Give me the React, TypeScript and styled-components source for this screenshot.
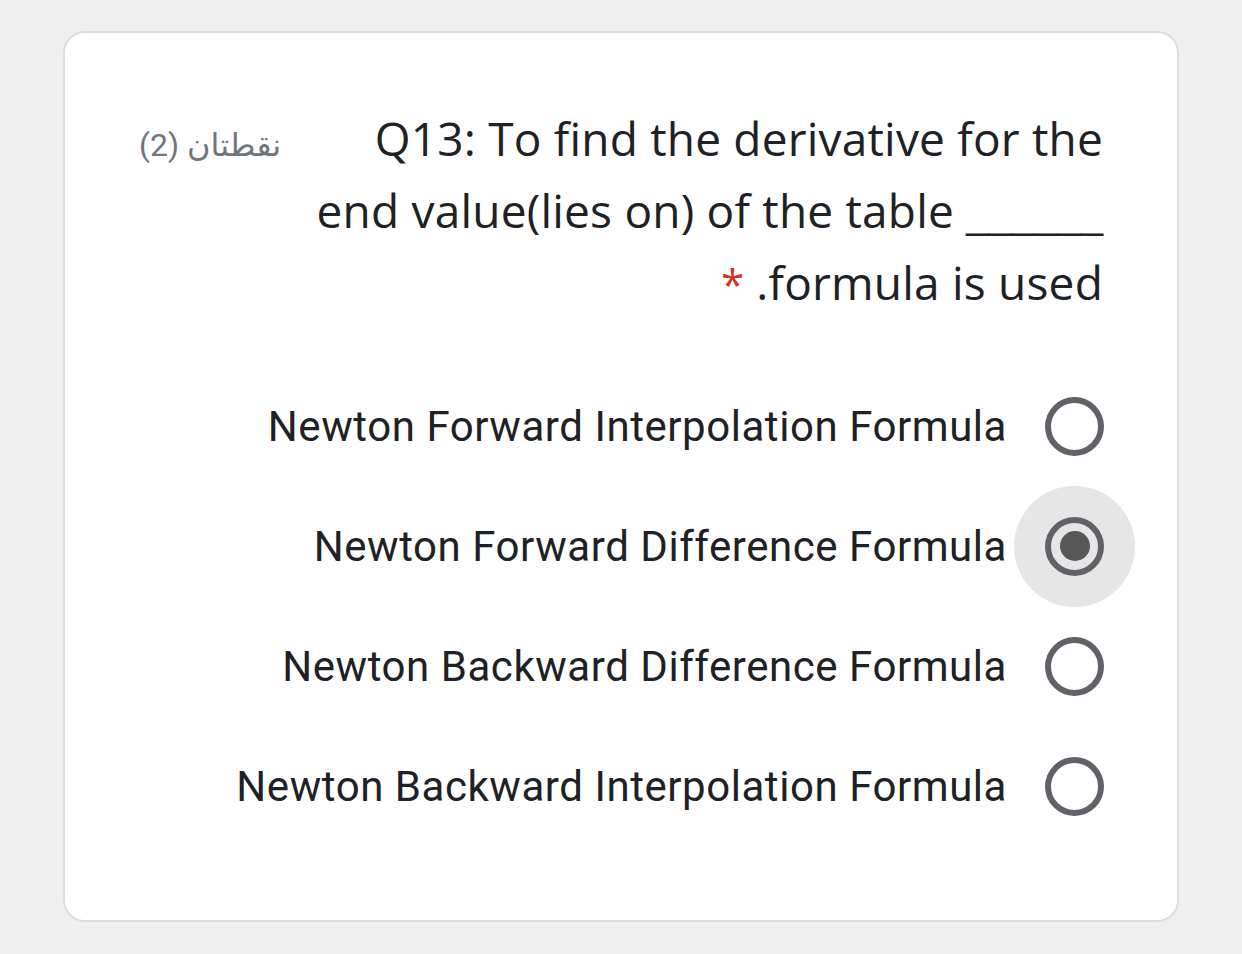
import React from "react";
import styled, { createGlobalStyle, css } from "styled-components";

const GlobalStyle = createGlobalStyle`
  html, body {
    margin: 0;
    padding: 0;
    background: #efefef;
  }
  body {
    font-family: "Roboto", "Liberation Sans", sans-serif;
  }
`;

const Page = styled.div`
  width: 1242px;
  height: 954px;
  box-sizing: border-box;
  padding: 31px 63px 0;
`;

const Card = styled.div`
  box-sizing: border-box;
  width: 1116px;
  height: 891px;
  background: #ffffff;
  border: 2px solid #dcdcdc;
  border-radius: 22px;
  padding: 69px 74px 0 74px;
  direction: rtl;
`;

const Header = styled.div`
  display: flex;
  align-items: baseline;
  gap: 28px;
`;

const Title = styled.div`
  flex: 1;
  font-family: "Open Sans", "Liberation Sans", sans-serif;
  font-size: 46px;
  line-height: 72px;
  color: #202124;
  letter-spacing: 0.2px;
`;

const Blank = styled.span`
  font-family: "Liberation Sans", sans-serif;
  font-size: 41px;
  line-height: 0;
  letter-spacing: 0;
`;

const Required = styled.span`
  color: #d93025;
  margin-right: 12px;
  font-size: 42px;
  line-height: 0;
`;

const Points = styled.div`
  font-family: "Roboto", "DejaVu Sans", sans-serif;
  font-size: 32px;
  color: #70757a;
  white-space: nowrap;
`;

const Options = styled.div`
  margin-top: 48px;
  display: flex;
  flex-direction: column;
`;

const OptionRow = styled.div`
  display: flex;
  align-items: center;
  height: 120px;
  gap: 38px;
`;

const Radio = styled.div<{ checked?: boolean }>`
  position: relative;
  flex: none;
  width: 59px;
  height: 59px;
  margin-right: -1px;
  box-sizing: border-box;
  border: 6px solid #5f6368;
  border-radius: 50%;

  ${({ checked }) =>
    checked &&
    css`
      background: #e6e6e6;
      box-shadow: 0 0 0 31px #e6e6e6;

      &::after {
        content: "";
        position: absolute;
        left: 50%;
        top: 50%;
        width: 30px;
        height: 30px;
        margin: -15px 0 0 -15px;
        border-radius: 50%;
        background: #555759;
      }
    `}
`;

const Label = styled.div`
  font-family: "Roboto", "Liberation Sans", sans-serif;
  font-size: 42px;
  color: #202124;
  letter-spacing: 0.55px;
`;

const options = [
  { label: "Newton Forward Interpolation Formula", checked: false },
  { label: "Newton Forward Difference Formula", checked: true },
  { label: "Newton Backward Difference Formula", checked: false },
  { label: "Newton Backward Interpolation Formula", checked: false },
];

const App = () => {
  return (
    <>
      <GlobalStyle />
      <Page>
        <Card>
          <Header>
            <Title>
              Q13: To find the derivative for the end value(lies on) of the
              table <Blank>______</Blank> formula is used.
              <Required>*</Required>
            </Title>
            <Points>نقطتان (2)</Points>
          </Header>
          <Options>
            {options.map((o) => (
              <OptionRow key={o.label}>
                <Radio checked={o.checked} />
                <Label>{o.label}</Label>
              </OptionRow>
            ))}
          </Options>
        </Card>
      </Page>
    </>
  );
};

export default App;
